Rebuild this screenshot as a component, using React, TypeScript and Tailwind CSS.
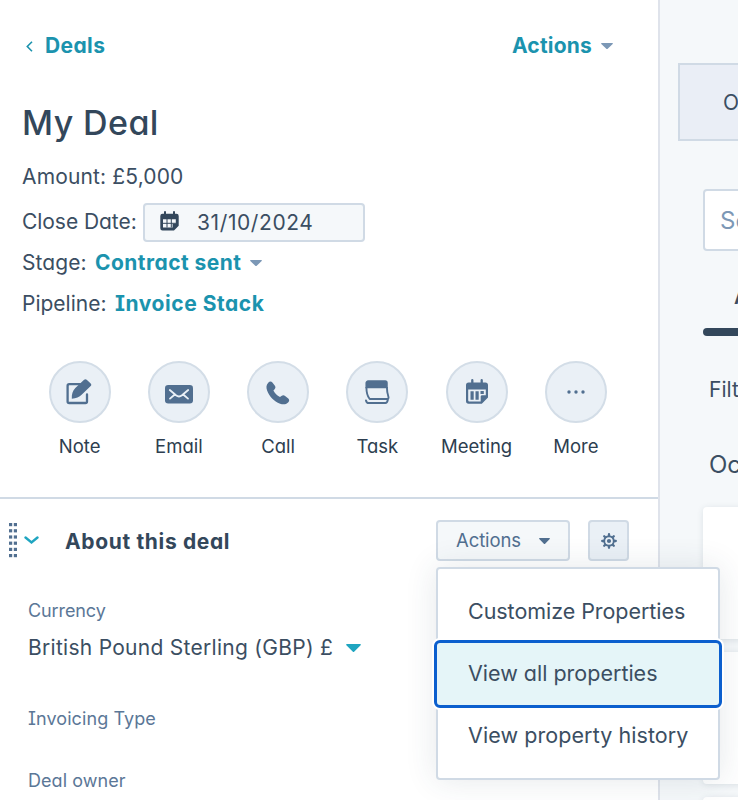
import React from "react";

const Caret = ({ className }: { className: string }) => (
  <svg viewBox="0 0 12 6" preserveAspectRatio="none" className={className} fill="currentColor">
    <path d="M0.7 0h10.6c.6 0 .8.5.4.9L6.7 5.7a1 1 0 0 1-1.4 0L.3.9C-.1.5.1 0 .7 0z" />
  </svg>
);

const NoteIcon = () => (
  <svg width="26" height="26" viewBox="0 0 26 26" fill="none">
    <path d="M14 5.100H3.200A1.600 1.600 0 0 0 1.600 6.700v15.700a1.600 1.600 0 0 0 1.600 1.600h16.200a1.600 1.600 0 0 0 1.600-1.600v-7" stroke="currentColor" strokeWidth="2.300" strokeLinecap="round" />
    <path d="M5.800 19.800C5.600 15 6.600 12 9.300 9.100L18.100.8c.8-.8 1.800-.8 2.600 0l4 3.700c.8.8.8 1.800 0 2.600l-8.800 8.500c-2.700 2.700-5.700 3.900-10.100 4.200z" fill="currentColor" />
  </svg>
);

const MailIcon = () => (
  <svg width="28" height="19" viewBox="0 0 28 19" fill="none">
    <rect width="28" height="18.500" rx="3.200" fill="currentColor" />
    <path d="M4.800 5l6.200 5.300c1.900 1.500 4.100 1.500 6 0L23.200 5M5 13.600l3.900-3.300M23 13.600l-3.900-3.300" stroke="#eaf0f6" strokeWidth="1.800" strokeLinecap="round" />
  </svg>
);

const PhoneIcon = () => (
  <svg width="24" height="24" viewBox="0 0 24 24" fill="currentColor">
    <path d="M2.200 1.700C3.700.3 5.200.2 6.400 1.600l2.500 3.200c.9 1.300.6 2.500-.5 3.700l-1 1.100c1.500 2.900 3.500 4.900 6.600 6.500l1.400-1.100c1.200-1 2.500-1.200 3.700-.1l3.200 2.700c1.300 1.200 1.100 2.700-.2 3.900-2.100 2-4.900 2.300-8 1.200C7.800 20.300 3.400 15.700 1.100 9.500 0 6.400.2 3.700 2.200 1.700z" />
  </svg>
);

const TaskIcon = () => (
  <svg width="25" height="25" viewBox="0 0 25 25" fill="none" stroke="currentColor">
    <path d="M1.300 7.300V3A1.800 1.800 0 0 1 3.100 1.200h17A1.800 1.800 0 0 1 21.900 3v4.300z" fill="currentColor" strokeWidth="1.700" />
    <path d="M1.400 7c0 5 .7 9 3.300 12h17.400c1.300 0 1.700-1 1.300-2.300C22.300 13.500 21.900 10.500 21.900 7" strokeWidth="1.900" strokeLinejoin="round" />
    <path d="M1 20.500c.4 1.600 1.300 2.600 2.600 2.600h16.800c1.300 0 2-1.200 2.400-3.200" strokeWidth="2" strokeLinecap="round" />
  </svg>
);

const MeetingIcon = () => (
  <svg width="22" height="25" viewBox="0 0 22 25" fill="none">
    <path d="M2.600 3.600h16.800A2.600 2.600 0 0 1 22 6.200v12.300l-6.200 6.200H2.600A2.600 2.600 0 0 1 0 22.100V6.200a2.600 2.600 0 0 1 2.600-2.600z" fill="currentColor" />
    <path d="M6.300 1.200V5M15.700 1.200V5" stroke="currentColor" strokeWidth="2.300" strokeLinecap="round" />
    <path d="M2.200 10.500h17.600v5.700h-3.600c-1 0-1.500.5-1.500 1.500v4.800H3.400a1.200 1.200 0 0 1-1.200-1.200z" fill="#eaf0f6" />
    <path d="M4.500 12.300h3.200v8.400H4.500zM9.500 12.300h3.200v8.400H9.500zM14.500 12h3.300v3h-3.300z" fill="currentColor" />
  </svg>
);

const MoreIcon = () => (
  <svg width="18" height="4" viewBox="0 0 18 4" fill="currentColor">
    <circle cx="2" cy="2" r="1.700" />
    <circle cx="9" cy="2" r="1.700" />
    <circle cx="16" cy="2" r="1.700" />
  </svg>
);

const DateIcon = () => (
  <svg width="19" height="20" viewBox="0 0 19 20" fill="none" className="text-[#33475b]">
    <path d="M2.500 2.800h14A2.200 2.200 0 0 1 18.700 5v9.800L14 19.500H2.500A2.200 2.200 0 0 1 .3 17.300V5a2.200 2.200 0 0 1 2.200-2.200z" fill="currentColor" />
    <path d="M5 1v3M14 1v3" stroke="currentColor" strokeWidth="2" strokeLinecap="round" />
    <path d="M3 8.200h12.800v4.600h-3.200v3.600H3z" fill="#f5f8fa" />
    <path d="M7 8v8.500M11.300 8v8.500M3 12.300h13" stroke="currentColor" strokeWidth="1" />
  </svg>
);

const GearIcon = () => (
  <svg width="16" height="16" viewBox="0 0 16 16" fill="none" stroke="currentColor">
    <circle cx="8" cy="8" r="4.800" strokeWidth="1.900" />
    <circle cx="8" cy="8" r="2.100" fill="currentColor" stroke="none" />
    <path d="M8 1.200v1.600M8 13.200v1.600M1.200 8h1.600M13.200 8h1.600M3.200 3.200l1.100 1.100M11.700 11.700l1.100 1.100M3.200 12.800l1.100-1.100M11.700 4.300l1.100-1.100" strokeWidth="2.300" strokeLinecap="round" />
  </svg>
);

const tools = [
  { label: "Note", icon: <NoteIcon />, pos: "-ml-0.5" },
  { label: "Email", icon: <MailIcon />, pos: "mt-[4px]" },
  { label: "Call", icon: <PhoneIcon />, pos: "mt-[2px]" },
  { label: "Task", icon: <TaskIcon />, pos: "" },
  { label: "Meeting", icon: <MeetingIcon />, pos: "-mt-px" },
  { label: "More", icon: <MoreIcon />, pos: "" },
];

export default function App() {
  return (
    <div className="flex h-[800px] w-[738px] overflow-hidden bg-white font-['Inter','Liberation_Sans',sans-serif] text-[21px] font-normal whitespace-nowrap text-[#3b4e62] [font-feature-settings:'cv11','cv08']">
      <main className="w-[658px] shrink-0">
        <header className="flex h-[90px] items-center pt-px pl-[26px] font-[650] text-[#1b93ae]">
          <svg width="7" height="11" viewBox="0 0 7 11" fill="none" stroke="currentColor" strokeWidth="1.600" className="mt-0.5">
            <path d="M6 .8L1.300 5.500 6 10.200" />
          </svg>
          <a className="ml-3 tracking-[0.4px]">Deals</a>
          <a className="ml-auto tracking-[0.2px]">Actions</a>
          <Caret className="mr-[45px] ml-[9px] h-[6px] w-3 text-[#7c98b6]" />
        </header>

        <section className="pl-[22px]">
          <h1 className="flex h-[66px] items-center pb-[2px] text-[34px] font-[550] tracking-[0.4px] text-[#33475b]">My Deal</h1>
          <div className="flex h-[42px] items-center tracking-[0.15px]">Amount: £5,000</div>
          <div className="flex h-[48px] items-center">
            <span className="w-[121px] tracking-[-0.05px]">Close Date:</span>
            <div className="mt-px flex h-[39px] w-[222px] items-center rounded-[4px] border-2 border-[#d0dae5] bg-[#f5f8fa] pl-[15px]">
              <span className="-mt-1"><DateIcon /></span>
              <span className="ml-[18px] tracking-[0.6px]">31/10/2024</span>
            </div>
          </div>
          <div className="flex h-[33px] items-center">
            <span className="w-[73px] tracking-[0.1px]">Stage:</span>
            <a className="font-[650] tracking-[0.45px] text-[#1b93ae]">Contract sent</a>
            <Caret className="mt-px ml-[9px] h-[6px] w-3 text-[#7c98b6]" />
          </div>
          <div className="flex h-[49px] items-center">
            <span className="w-[93px] tracking-[0px]">Pipeline:</span>
            <a className="font-[650] tracking-[0.55px] text-[#1b93ae]">Invoice Stack</a>
          </div>
        </section>

        <nav className="flex h-[169px] pt-[33px] pl-[30px] text-[18.500px] text-[#2d3e50]">
          {tools.map((t) => (
            <div key={t.label} className="flex w-[99.250px] flex-col items-center">
              <div className="flex size-[62px] items-center justify-center rounded-full border-2 border-[#d3dde7] bg-[#eaf0f6] text-[#516f90]">
                <span className={t.pos}>{t.icon}</span>
              </div>
              <span className="mt-[11px] leading-6">{t.label}</span>
            </div>
          ))}
        </nav>

        <section className="border-t-2 border-[#d0dae5]">
          <div className="flex h-[82px] items-center pl-[9px]">
            <svg width="8" height="35" viewBox="0 0 8 35" fill="#516f90">
              {[0, 1, 2, 3, 4, 5].map((i) => (
                <g key={i}>
                  <rect x="0" y={i * 6.2} width="3.200" height="3.200" />
                  <rect x="4.800" y={i * 6.2} width="3.200" height="3.200" />
                </g>
              ))}
            </svg>
            <svg width="15" height="9" viewBox="0 0 15 9" fill="none" stroke="#1fa5c0" strokeWidth="2.400" strokeLinecap="round" className="ml-[7px]">
              <path d="M1.500 1.500L7.500 6.500l6-5" />
            </svg>
            <h2 className="mt-[3px] ml-[26px] font-[650] tracking-[0.65px] text-[#33475b]">About this deal</h2>
            <div className="mr-[29px] ml-auto flex gap-[18px] text-[#516f90]">
              <div className="relative">
                <button className="flex h-[41px] w-[134px] items-center rounded-[4px] border-2 border-[#d0dae5] bg-[#f5f8fa] pt-[2px] pl-[18px] text-[18.500px] tracking-[-0.1px]">
                  Actions
                  <Caret className="ml-[18px] h-[6px] w-[11px]" />
                </button>
                <div className="absolute top-[47px] left-0 z-10 h-[213px] w-[284px] rounded-[4px] border-2 border-[#d0dae5] bg-white pt-[12px] text-[21.500px] text-[#3b4e62] shadow-[0_0_32px_rgba(45,62,80,0.12)]">
                  <div className="flex h-[62px] items-center pl-[30px] tracking-[-0.05px]">Customize Properties</div>
                  <div className="-mx-1 -mt-[3px] -mb-[3px] flex h-[68px] items-center rounded-[6px] border-[3px] border-[#0b5fce] bg-[#e5f5f8] pl-[31px] tracking-[0px] shadow-[0_0_0_2px_white]">View all properties</div>
                  <div className="flex h-[62px] items-center pl-[30px] tracking-[0.08px]">View property history</div>
                </div>
              </div>
              <button className="flex size-[41px] items-center justify-center rounded-[4px] border-2 border-[#d0dae5] bg-[#eaf0f6] pt-[2px]">
                <GearIcon />
              </button>
            </div>
          </div>
          <div className="pl-[28px]">
            <div className="mt-[12px] flex h-[34px] items-center text-[18px] tracking-[-0.1px] text-[#5b7797]">Currency</div>
            <div className="flex h-[40px] items-center pt-px tracking-[0.28px]">
              British Pound Sterling (GBP) £
              <Caret className="ml-[13px] h-[8px] w-[15px] text-[#1fa5c0]" />
            </div>
            <div className="mt-[34px] flex h-[34px] items-center pt-px text-[18px] tracking-[0.08px] text-[#5b7797]">Invoicing Type</div>
            <div className="mt-[28px] flex h-[34px] items-center pt-px text-[18px] tracking-[0.05px] text-[#5b7797]">Deal owner</div>
          </div>
        </section>
      </main>

      <aside className="flex w-[80px] shrink-0 flex-col overflow-hidden border-l-2 border-[#dfe3eb] bg-[#f5f8fa]">
        <div className="mt-[63px] ml-[18px] flex h-[78px] w-[200px] shrink-0 items-center border-2 border-[#d0dae5] bg-[#eaeef6] pt-px pl-[43px]">O</div>
        <div className="mt-[48px] ml-[43px] flex h-[62px] w-[200px] shrink-0 items-center rounded-[4px] border-2 border-[#d0dae5] bg-white pt-[2px] pl-[15px] text-[24px] text-[#7c98b6]">Se</div>
        <div className="mt-[30px] ml-[74px] h-[32px] shrink-0 leading-[32px] font-semibold">A</div>
        <div className="mt-[15px] ml-[43px] h-[8px] w-[200px] shrink-0 rounded-full bg-[#33475b]" />
        <div className="mt-[38px] ml-[49px] h-[32px] shrink-0 leading-[32px]">Filt</div>
        <div className="mt-[43px] ml-[49px] h-[32px] shrink-0 text-[24px] leading-[32px]">Oc</div>
        <div className="mt-[26px] ml-[43px] h-[132px] w-[200px] shrink-0 rounded-[4px] bg-white shadow-[0_1px_6px_rgba(45,62,80,0.12)]" />
        <div className="mt-[13px] ml-[43px] h-[132px] w-[200px] shrink-0 rounded-[4px] bg-white shadow-[0_1px_6px_rgba(45,62,80,0.12)]" />
        <div className="mt-[13px] ml-[43px] h-[133px] w-[200px] shrink-0 rounded-[4px] bg-white shadow-[0_1px_6px_rgba(45,62,80,0.12)]" />
      </aside>
    </div>
  );
}
